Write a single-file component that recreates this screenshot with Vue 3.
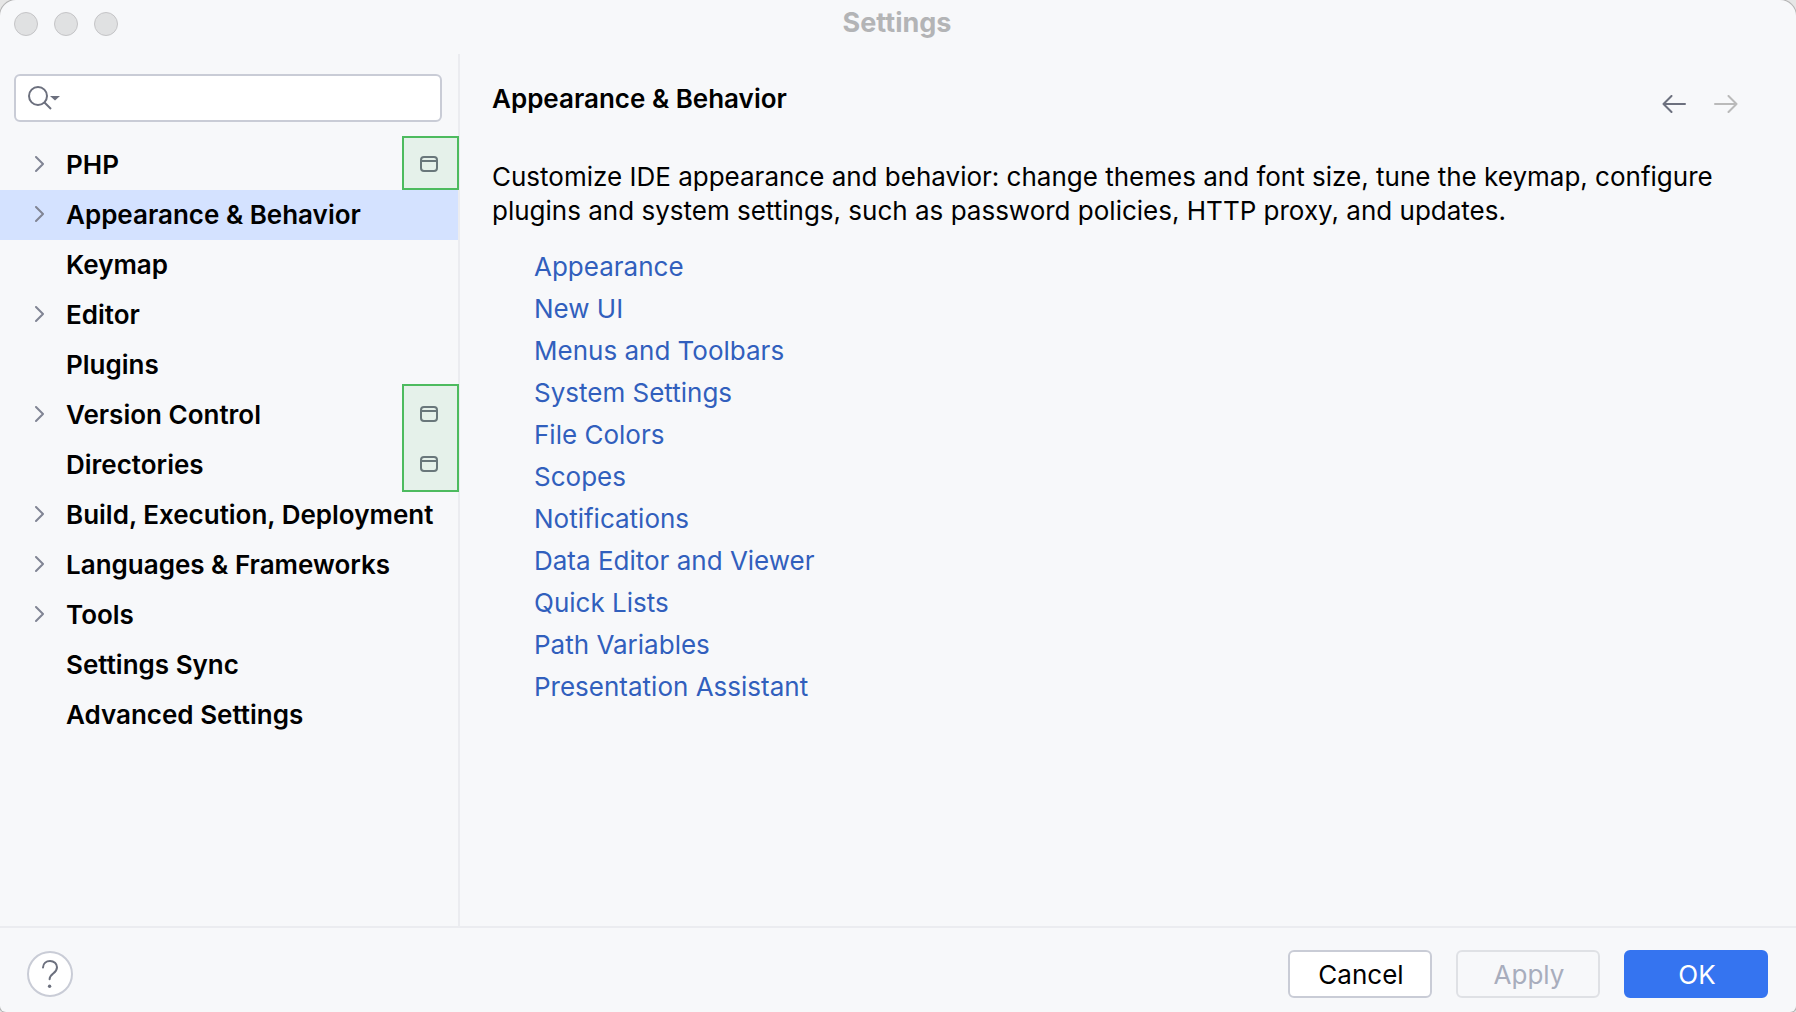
<script setup>
import { ref } from 'vue'

const query = ref('')
const selected = ref('Appearance & Behavior')

const groups = [
  { name: 'PHP', expandable: true, project: true, mark: 'single' },
  { name: 'Appearance & Behavior', expandable: true },
  { name: 'Keymap' },
  { name: 'Editor', expandable: true },
  { name: 'Plugins' },
  { name: 'Version Control', expandable: true, project: true, mark: 'double' },
  { name: 'Directories', project: true },
  { name: 'Build, Execution, Deployment', expandable: true },
  { name: 'Languages & Frameworks', expandable: true },
  { name: 'Tools', expandable: true },
  { name: 'Settings Sync' },
  { name: 'Advanced Settings' },
]

const pages = [
  'Appearance',
  'New UI',
  'Menus and Toolbars',
  'System Settings',
  'File Colors',
  'Scopes',
  'Notifications',
  'Data Editor and Viewer',
  'Quick Lists',
  'Path Variables',
  'Presentation Assistant',
]
</script>

<template>
  <div class="backdrop">
    <div class="window">
      <header class="titlebar">
        <div class="lights">
          <button type="button" class="light" aria-label="Close"></button>
          <button type="button" class="light" aria-label="Minimize"></button>
          <button type="button" class="light" aria-label="Zoom"></button>
        </div>
        <h1 class="title">Settings</h1>
      </header>

      <div class="body">
        <aside class="sidebar">
          <label class="search">
            <svg width="34" height="26" viewBox="0 0 34 26" fill="none" aria-hidden="true">
              <circle cx="10" cy="11" r="9" stroke="#6c707e" stroke-width="2" />
              <path d="M16.5 17.5L23 24" stroke="#6c707e" stroke-width="2" />
              <path d="M22 11H32L27 15.6Z" fill="#6c707e" />
            </svg>
            <input v-model="query" type="text" aria-label="Search settings" />
          </label>

          <nav class="tree" aria-label="Settings groups">
            <button
              v-for="group in groups"
              :key="group.name"
              type="button"
              class="row"
              :class="{ selected: group.name === selected }"
              @click="selected = group.name"
            >
              <span class="chevron">
                <svg v-if="group.expandable" width="10" height="18" viewBox="0 0 10 18" fill="none" aria-hidden="true">
                  <path d="M1 1L8 8L1 15" stroke="#818594" stroke-width="2" stroke-linecap="round" stroke-linejoin="round" />
                </svg>
              </span>
              <span class="name">{{ group.name }}</span>
              <svg v-if="group.project" class="project" width="18" height="18" viewBox="0 0 18 18" fill="none" aria-hidden="true">
                <rect x="1" y="1" width="16" height="14" rx="3" stroke="#6c707e" stroke-width="2" />
                <path d="M1 5H17" stroke="#6c707e" stroke-width="2" />
              </svg>
              <span v-if="group.mark" class="mark" :class="group.mark"></span>
            </button>
          </nav>
        </aside>

        <main class="content">
          <div class="heading">
            <h2>Appearance &amp; Behavior</h2>
            <div class="history">
              <button type="button" aria-label="Back">
                <svg width="24" height="18" viewBox="0 0 24 18" fill="none" aria-hidden="true">
                  <path d="M9.5 1L1.5 9L9.5 17M1.5 9H23" stroke="#6c707e" stroke-width="2" stroke-linecap="round" stroke-linejoin="round" />
                </svg>
              </button>
              <button type="button" aria-label="Forward" disabled>
                <svg width="24" height="18" viewBox="0 0 24 18" fill="none" aria-hidden="true">
                  <path d="M14.5 1L22.5 9L14.5 17M22.5 9H1" stroke="#bababa" stroke-width="2" stroke-linecap="round" stroke-linejoin="round" />
                </svg>
              </button>
            </div>
          </div>
          <p class="description">
            Customize IDE appearance and behavior: change themes and font size, tune the keymap, configure
            plugins and system settings, such as password policies, HTTP proxy, and updates.
          </p>
          <ul class="pages">
            <li v-for="page in pages" :key="page"><a href="#">{{ page }}</a></li>
          </ul>
        </main>
      </div>

      <footer class="footer">
        <button type="button" class="help" aria-label="Help">
          <svg width="18" height="30" viewBox="0 0 18 30" fill="none" aria-hidden="true">
            <path d="M2 8.5C2.2 4.6 5.2 2 9 2C13 2 16 4.6 16 8.2C16 11.2 14.4 12.8 12.2 14.6C9.8 16.5 8.6 17.8 8.6 20.3" stroke="#6c707e" stroke-width="2" stroke-linecap="round" />
            <circle cx="8.6" cy="27.2" r="1.7" fill="#6c707e" />
          </svg>
        </button>
        <div class="actions">
          <button type="button" class="action">Cancel</button>
          <button type="button" class="action" disabled>Apply</button>
          <button type="button" class="action primary">OK</button>
        </div>
      </footer>
    </div>
  </div>
</template>

<style>
body {
  margin: 0;
}
</style>

<style scoped>
.backdrop {
  background: #e6e6e6;
}

.window {
  display: flex;
  flex-direction: column;
  box-sizing: border-box;
  min-height: 100vh;
  background: #f7f8fa;
  border-radius: 16px 16px 6px 6px;
  box-shadow: 0 0 0 1px #b4b4b4;
  overflow: hidden;
  font-family: Inter, 'Liberation Sans', sans-serif;
  font-size: 26px;
  line-height: 34px;
  color: #000;
}

button {
  margin: 0;
  padding: 0;
  border: 0;
  background: none;
  font: inherit;
  color: inherit;
}

svg {
  display: block;
  flex: none;
}

.titlebar {
  display: grid;
  grid-template-columns: 1fr auto 1fr;
  align-items: center;
  height: 48px;
  padding: 0 16px 0 14px;
  margin-bottom: 6px;
}

.lights {
  display: flex;
  gap: 16px;
}

.light {
  box-sizing: border-box;
  width: 24px;
  height: 24px;
  border: 1px solid #c4c4c6;
  border-radius: 50%;
  background: #e0e1e2;
}

.title {
  margin: 0;
  padding-bottom: 2px;
  font-size: 27px;
  line-height: 34px;
  font-weight: 700;
  color: #b3b4b6;
}

.body {
  display: flex;
  flex: 1;
}

.sidebar {
  flex: none;
  width: 458px;
  border-right: 2px solid #ebecf0;
}

.search {
  display: flex;
  align-items: center;
  box-sizing: border-box;
  height: 48px;
  margin: 20px 16px 18px 14px;
  padding: 0 12px;
  border: 2px solid #c9ccd6;
  border-radius: 6px;
  background: #fff;
}

.search input {
  flex: 1;
  min-width: 0;
  padding: 0 8px;
  border: 0;
  outline: 0;
  background: none;
  font: inherit;
}

.tree {
  display: flex;
  flex-direction: column;
}

.row {
  position: relative;
  display: flex;
  align-items: center;
  height: 50px;
  padding: 0 20px 0 35px;
  font-weight: 600;
  text-align: left;
  white-space: nowrap;
}

.row.selected {
  background: #d4e2ff;
}

.chevron {
  flex: none;
  width: 31px;
}

.name {
  flex: 1;
}

.mark {
  position: absolute;
  top: -4px;
  right: -1px;
  box-sizing: border-box;
  width: 57px;
  height: 54px;
  border: 2px solid #4dbb5f;
  background: rgba(77, 187, 95, 0.1);
  z-index: 1;
}

.mark.double {
  top: -6px;
  height: 108px;
}

.content {
  flex: 1;
  min-width: 0;
  padding: 28px 58px 28px 32px;
}

.heading {
  display: flex;
  align-items: center;
  justify-content: space-between;
  margin-bottom: 44px;
}

h2 {
  margin: 0;
  font-size: 26px;
  line-height: 34px;
  font-weight: 600;
}

.history {
  display: flex;
  gap: 28px;
  padding-top: 10px;
}

.description {
  margin: 0 0 18px;
}

.pages {
  margin: 0;
  padding: 0 0 0 42px;
  list-style: none;
}

.pages li {
  line-height: 42px;
}

.pages a {
  color: #315fbd;
  text-decoration: none;
}

.footer {
  display: flex;
  align-items: center;
  justify-content: space-between;
  padding: 22px 28px 14px 27px;
  border-top: 2px solid #ebecf0;
}

.help {
  display: flex;
  align-items: center;
  justify-content: center;
  box-sizing: border-box;
  width: 46px;
  height: 46px;
  border: 2px solid #c9ccd6;
  border-radius: 50%;
  background: #fff;
}

.actions {
  display: flex;
  gap: 24px;
}

.action {
  box-sizing: border-box;
  width: 144px;
  height: 48px;
  padding: 2px 0 0 2px;
  border: 2px solid #c9ccd6;
  border-radius: 6px;
  background: #fff;
}

.action:disabled {
  border-color: #dfe1e5;
  background: none;
  color: #a8adbd;
}

.action.primary {
  border-color: #3574f0;
  background: #3574f0;
  color: #fff;
}
</style>
